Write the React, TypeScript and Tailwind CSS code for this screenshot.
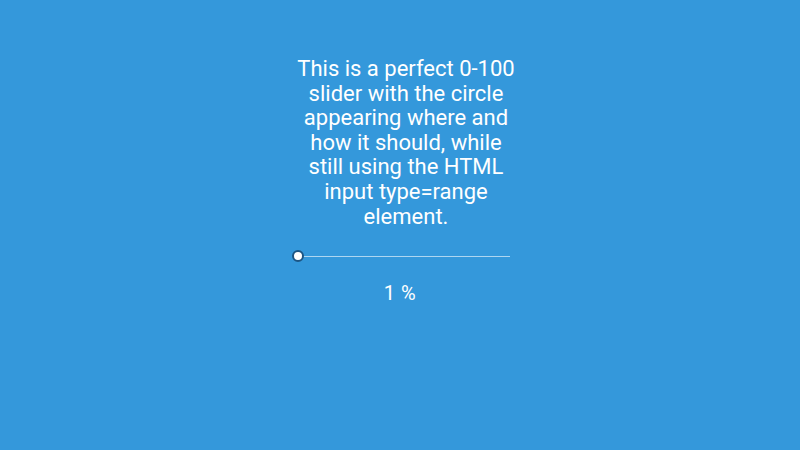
import { useState } from 'react';

export default function App() {
  const [value] = useState(1);

  return (
    <div
      className="w-[800px] h-[450px] bg-[#3498db] text-white flex flex-col items-center pt-[57px]"
      style={{ fontFamily: 'Roboto, "Liberation Sans", sans-serif' }}
    >
      <p className="w-[226px] ml-[12px] text-[22px] leading-[24.6px] text-center">
        This is a perfect 0-100 slider with the circle appearing where and how it should, while still using the HTML input type=range element.
      </p>

      {/* track + thumb */}
      <div className="relative w-[218px] ml-[2px] h-[12px] mt-[21px]">
        <div className="absolute left-[6px] right-0 top-[5.5px] h-px bg-white/60" />
        <div
          className="absolute top-0 w-[12px] h-[12px] rounded-full bg-white border-2 border-[#1c5583]"
          style={{ left: `${((value - 1) / 99) * 206}px` }}
        />
      </div>

      <div className="mt-[19px] text-[20px] leading-[24px] tracking-wide">{value} %</div>
    </div>
  );
}
